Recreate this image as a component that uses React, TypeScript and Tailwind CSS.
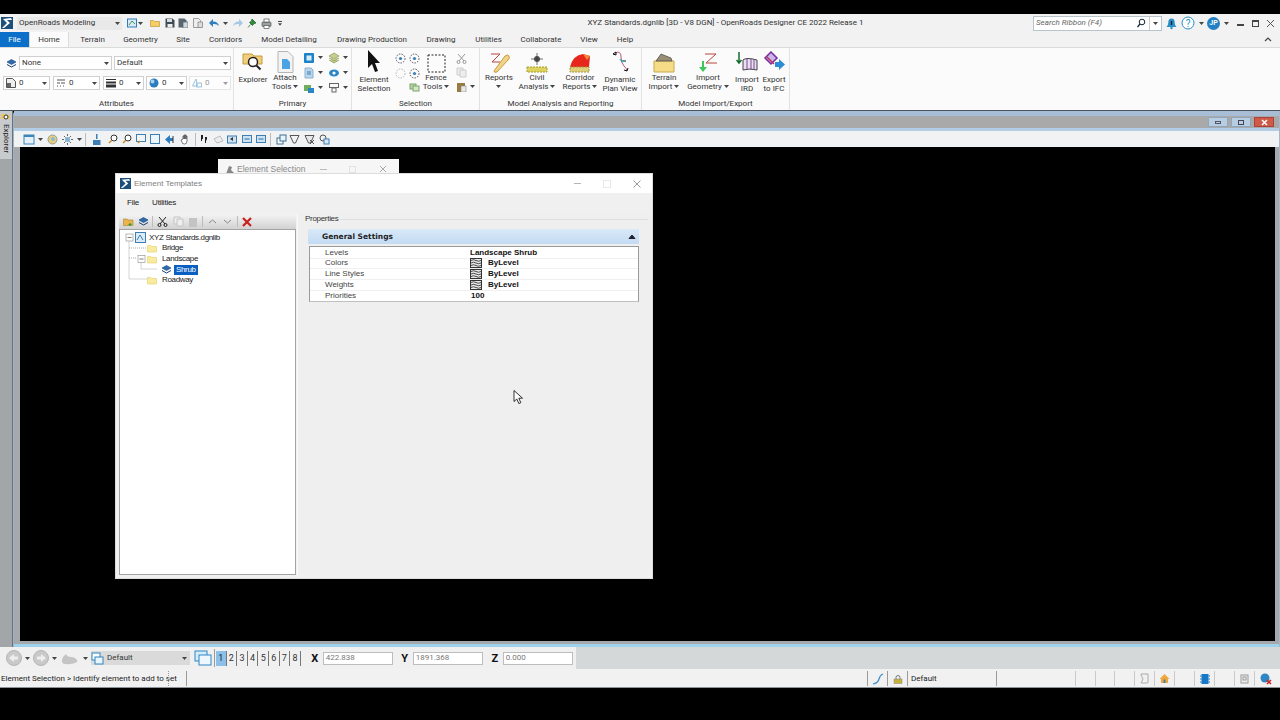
import React from "react";

const Tri = ({ c = "" }: { c?: string }) => (
  <svg viewBox="0 0 5 3" className={"w-[5px] h-[3px] shrink-0 " + c}><path d="M0 0h5L2.5 3z" fill="#444" /></svg>
);

const Sv = ({ s = 12, h, children, c = "" }: { s?: number; h?: number; children: React.ReactNode; c?: string }) => (
  <svg viewBox={`0 0 ${s} ${h ?? s}`} width={s} height={h ?? s} className={"shrink-0 " + c}>{children}</svg>
);

const Logo = ({ s = 12 }: { s?: number }) => (
  <svg viewBox="0 0 12 12" width={s} height={s} className="shrink-0">
    <rect width="12" height="12" fill="#1d4f7c" />
    <path d="M1 11 L6 6 L2 2 L10 1 L11 3 L6 3 L9 6 L3 11z" fill="#fff" />
  </svg>
);

const Folder = ({ s = 10 }: { s?: number }) => (
  <svg viewBox="0 0 10 10" width={s} height={s} className="shrink-0">
    <path d="M0.5 2.5h3.5l1 1h4.5v5.5h-9z" fill="#f9eb9c" stroke="#e3cf6c" strokeWidth=".6" />
  </svg>
);

const SmallIcon = ({ k }: { k: number }) => {
  const m: React.ReactNode[] = [
    <g key="a"><rect x="1" y="1" width="10" height="10" rx="1" fill="#1c83c9" /><rect x="3.5" y="3.5" width="5" height="5" fill="#d8ecfa" /></g>,
    <path key="b" d="M1 4l5-3 5 3-5 3zM1 6l5 3 5-3M1 8l5 3 5-3" fill="#c8cf8e" stroke="#8b9651" strokeWidth=".7" />,
    <g key="c"><path d="M2 1h6l2 2v8H2z" fill="#b9d6ee" stroke="#8fb0cc" /><path d="M4 5h4M4 7h4" stroke="#3d7fb5" /></g>,
    <g key="d"><ellipse cx="6" cy="6" rx="5" ry="3.5" fill="#2b86c8" /><circle cx="6" cy="6" r="1.6" fill="#fff" /></g>,
    <g key="e"><rect x="1" y="3" width="7" height="6" fill="#6eae5c" /><rect x="5" y="6" width="6" height="5" fill="#2b86c8" /></g>,
    <g key="f" fill="none" stroke="#666"><rect x="1.5" y="1.5" width="9" height="4" /><rect x="4" y="6" width="4" height="4" /></g>,
  ];
  return <Sv>{m[k]}</Sv>;
};

const DashCircle = ({ on }: { on?: boolean }) => (
  <Sv s={11}>
    <circle cx="5.5" cy="5.5" r="4.5" fill="none" stroke={on ? "#445" : "#aaa"} strokeWidth=".9" strokeDasharray="1.5 1.2" />
    {on && <circle cx="5.5" cy="5.5" r="1.6" fill="#3b7fb5" />}
  </Sv>
);

const Big = ({ w, icon, a, b, caret, low, ml }: { w: string; icon: React.ReactNode; a: string; b?: string; caret?: boolean; low?: boolean; ml?: string }) => (
  <div className={"flex flex-col items-center shrink-0 " + w + " " + (ml ?? "")}>
    <div className="h-[25px] flex items-end justify-center">{icon}</div>
    <div className={"flex flex-col items-center leading-[8.5px] text-[#333] " + (low ? "mt-[3px]" : "mt-[1px]")}>
      <span className="whitespace-nowrap">{a}</span>
      <span className="whitespace-nowrap flex items-center gap-[2px] h-[8.5px]">{b}{caret && <Tri />}</span>
    </div>
  </div>
);

const Group = ({ w, label, children }: { w: string; label: string; children: React.ReactNode }) => (
  <div className={"h-full flex flex-col shrink-0 border-r border-[#e2e2e2] " + w}>
    <div className="flex-1 flex relative min-h-0">{children}</div>
    <div className="h-[12px] flex items-center justify-center text-[#333] whitespace-nowrap">{label}</div>
  </div>
);

const Combo = ({ w, text, tint = "", icon }: { w: string; text?: string; tint?: string; icon?: React.ReactNode }) => (
  <div className={"h-[14px] bg-white border border-[#d0d0d0] flex items-center px-[2px] gap-[3px] " + w + " " + tint}>
    {icon}
    <span className="flex-1 text-[#333] whitespace-nowrap">{text}</span>
    <Tri />
  </div>
);

const tabs: [string, string][] = [
  ["Terrain", "w-[47px]"], ["Geometry", "w-[49px]"], ["Site", "w-[36px]"], ["Corridors", "w-[49px]"],
  ["Model Detailing", "w-[78px]"], ["Drawing Production", "w-[88px]"], ["Drawing", "w-[50px]"], ["Utilities", "w-[45px]"],
  ["Collaborate", "w-[60px]"], ["View", "w-[36px]"], ["Help", "w-[36px]"],
];

const Sep = ({ c = "" }: { c?: string }) => <div className={"w-px h-[13px] bg-[#bcbcbc] shrink-0 " + c} />;

const Mag = ({ c = "#333" }: { c?: string }) => (
  <Sv s={10}><circle cx="6" cy="4" r="3" fill="#fff" stroke={c} strokeWidth="1" /><path d="M3.8 6.2L1 9" stroke="#c98a2b" strokeWidth="1.5" /></Sv>
);

const Swatch = () => (
  <Sv s={12} h={10}>
    <rect x=".5" y=".5" width="11" height="9" fill="#e8e8e8" stroke="#333" />
    <path d="M1 2.5q2.5-1.5 5 0t5 0M1 5q2.5-1.5 5 0t5 0M1 7.5q2.5-1.5 5 0t5 0" fill="none" stroke="#222" strokeWidth=".8" />
  </Sv>
);

const LevelIcon = ({ s = 11 }: { s?: number }) => (
  <svg viewBox="0 0 11 10" width={s} height={s} className="shrink-0">
    <path d="M1 3.5L5.5 1 10 3.5 5.5 6z" fill="#2b6cb0" stroke="#153e75" strokeWidth=".6" />
    <path d="M1 6l4.5 2.5L10 6" fill="none" stroke="#153e75" strokeWidth="1" />
  </svg>
);

const Row = ({ l, children }: { l: string; children: React.ReactNode }) => (
  <div className="h-[10.65px] flex items-center border-b border-[#f0f0f0] last:border-b-0">
    <span className="w-[160px] pl-[15px] text-[#444] whitespace-nowrap">{l}</span>
    {children}
  </div>
);

const By = () => (
  <div className="flex items-center gap-[6px]"><Swatch /><span className="font-bold text-[#111]">ByLevel</span></div>
);

const Field = ({ l, v, w }: { l: string; v: string; w: string }) => (
  <div className="flex items-center gap-[4px] shrink-0">
    <span className="font-bold text-[11px] text-[#111] w-[8px] text-center">{l}</span>
    <div className={"h-[13px] bg-white border border-[#bdbdbd] px-[2px] flex items-center text-[#777] " + w}>{v}</div>
  </div>
);

const SLine = ({ m }: { m: string }) => <div className={"w-px h-[15px] bg-[#9a9a9a] shrink-0 " + m} />;

const dlg = { fontFamily: '"Liberation Sans", Arial, sans-serif' };

export default function App() {
  return (
    <div className="w-[1280px] h-[720px] bg-black overflow-hidden flex flex-col text-[8px] leading-none" style={{ fontFamily: 'Roboto, "Noto Sans", sans-serif' }}>
      <div className="h-[14px] shrink-0" />
      {/* title bar */}
      <div className="h-[18px] shrink-0 bg-[#f2f2f2] flex items-center pl-[1px] relative">
        <Logo />
        <div className="ml-[4px] w-[105px] h-[13px] bg-[#e9e9e9] flex items-center pl-[2px] pr-[2px] text-[#333]">
          <span className="flex-1">OpenRoads Modeling</span><Tri />
        </div>
        <div className="ml-[5px] flex items-center">
          <Sv s={10}><rect x=".5" y="1" width="9" height="8" fill="#dbe9f6" stroke="#2d7dbd" /><path d="M2 7l3-4 3 3" fill="none" stroke="#3b9a5b" /></Sv>
          <Tri c="ml-[1px]" />
          <span className="ml-[7px]"><Sv s={10}><path d="M.5 2.5h3l1 1h5v5h-9z" fill="#f4cf68" stroke="#c4962b" strokeWidth=".7" /></Sv></span>
          <span className="ml-[5px]"><Sv s={10}><path d="M.5.5h7l2 2v7h-9z" fill="#3f4a55" /><rect x="2" y="1" width="5" height="3" fill="#d6dbe0" /><rect x="2.5" y="6" width="5" height="3.5" fill="#eee" /></Sv></span>
          <span className="ml-[3px]"><Sv s={10}><path d="M.5.5h6l2 2v7h-8z" fill="#58646f" /><path d="M5 4h5v6H5z" fill="#cfd6dc" stroke="#58646f" strokeWidth=".7" /></Sv></span>
          <span className="ml-[5px]"><Sv s={10}><path d="M.5.5h5l2 2v7h-7z" fill="#eee" stroke="#888" strokeWidth=".8" /><path d="M5 4h4.5v5.5H5z" fill="#ddd" stroke="#888" strokeWidth=".8" /></Sv></span>
          <span className="ml-[6px]"><Sv s={10}><path d="M0 5l4-4v2.500q5 0 6 4.500-2-2.500-6-2v3z" fill="#2f7fbf" /></Sv></span>
          <Tri c="ml-[4px]" />
          <span className="ml-[5px]"><Sv s={10}><path d="M10 5L6 1v2.500q-5 0-6 4.500 2-2.500 6-2v3z" fill="#a5c8e4" /></Sv></span>
          <span className="ml-[4px]"><Sv s={10}><path d="M5 1l4 4-2 .5-1.500 2-3-3 2-1.500zM3.500 6.500L1 9.500" fill="#2f8a3e" stroke="#1f6a2e" strokeWidth=".8" /></Sv></span>
          <span className="ml-[4px]"><Sv s={11}><rect x="1" y="4" width="9" height="4.500" rx="1" fill="#9aa5a0" stroke="#555" strokeWidth=".7" /><rect x="3" y="1" width="5" height="3" fill="#fff" stroke="#555" strokeWidth=".7" /><rect x="3" y="7.500" width="5" height="3" fill="#fff" stroke="#555" strokeWidth=".7" /></Sv></span>
          <span className="ml-[6px] flex flex-col items-center gap-[1px]"><span className="w-[4px] h-px bg-[#444]" /><Tri c="!w-[4px]" /></span>
        </div>
        <div className="flex-1 text-center text-[#333] whitespace-nowrap pl-[136px]">XYZ Standards.dgnlib [3D - V8 DGN] - OpenRoads Designer CE 2022 Release 1</div>
        <div className="flex items-center pr-[5px]">
          <div className="w-[129px] h-[15px] bg-white border border-[#b8c4cc] flex items-center pl-[2px] italic text-[#666]">
            <span className="flex-1">Search Ribbon (F4)</span>
            <Sv s={10} c="mr-[3px]"><circle cx="6" cy="4" r="2.800" fill="none" stroke="#123" strokeWidth="1" /><path d="M4 6L1.500 9" stroke="#123" strokeWidth="1.200" /></Sv>
            <div className="w-[12px] h-full border-l border-[#ccc] flex items-center justify-center"><Tri /></div>
          </div>
          <span className="ml-[3px]"><Sv s={13}><path d="M6.500 1.500q-3.200 0-3.200 4 0 3-1.800 4.500h10q-1.800-1.500-1.800-4.500 0-4-3.200-4z" fill="#2b8fc9" /><circle cx="6.500" cy="11" r="1.200" fill="#2b8fc9" /><rect x="5.800" y="4" width="1.400" height="4" fill="#123" /></Sv></span>
          <span className="ml-[3px]"><Sv s={14}><circle cx="7" cy="7" r="6" fill="#fff" stroke="#2b8fc9" strokeWidth="1" /><text x="7" y="10.500" textAnchor="middle" fontSize="10" fill="#2b8fc9">?</text></Sv></span>
          <Tri c="ml-[4px]" />
          <div className="ml-[3px] w-[13px] h-[13px] rounded-full bg-[#2480c4] text-white flex items-center justify-center text-[7px] font-semibold">JP</div>
          <Tri c="ml-[4px]" />
          <span className="ml-[8px] w-[7px] h-[2px] mt-[3px] bg-[#444]" />
          <span className="ml-[8px] w-[7px] h-[7px] border border-[#444] border-t-2" />
          <span className="ml-[7px]"><Sv s={9}><path d="M1 1l7 7M8 1L1 8" stroke="#555" strokeWidth="1" /></Sv></span>
        </div>
      </div>
      {/* tabs */}
      <div className="h-[15px] shrink-0 bg-[#f2f2f2] flex text-[#333] relative">
        <div className="w-[29px] bg-[#0b70c9] text-white flex items-center justify-center">File</div>
        <div className="w-[40px] bg-[#fbfbfb] border-l border-r border-[#dcdcdc] flex items-center justify-center">Home</div>
        {tabs.map(([t, w]) => <div key={t} className={"flex items-center justify-center whitespace-nowrap " + w}>{t}</div>)}
        <div className="flex-1" />
        <div className="flex items-center pr-[8px]"><Sv s={8} h={5}><path d="M1 4l3-3 3 3" fill="none" stroke="#444" strokeWidth="1.200" /></Sv></div>
      </div>
      {/* ribbon */}
      <div className="h-[63px] shrink-0 bg-[#fbfbfb] border-t border-[#dadada] flex">
        <Group w="w-[234px]" label="Attributes">
          <div className="flex flex-col pt-[8px] pl-[3px] gap-[6px]">
            <div className="flex items-center">
              <span className="w-[16px] flex justify-center"><LevelIcon /></span>
              <Combo w="w-[93px]" text="None" />
              <Combo w="w-[117px] ml-[2px]" text="Default" />
            </div>
            <div className="flex items-center">
              <Combo w="w-[47px]" text="0" icon={<Sv s={10}><path d="M.5.5h6l3 3v6h-9z" fill="#eee" stroke="#555" /><rect x="1" y="5" width="4" height="4" fill="#666" /></Sv>} />
              <Combo w="w-[47px] ml-[3px]" text="0" icon={<Sv s={10}><path d="M1 2h8M1 5h3M5 5h4M1 8h1M4 8h1M7 8h1" stroke="#555" /></Sv>} />
              <Combo w="w-[41px] ml-[3px]" text="0" icon={<Sv s={10}><path d="M0 1.500h10" stroke="#333" /><path d="M0 4.500h10" stroke="#333" strokeWidth="2" /><path d="M0 8h10" stroke="#333" strokeWidth="3" /></Sv>} />
              <Combo w="w-[41px] ml-[2px]" text="0" icon={<Sv s={10}><circle cx="5" cy="5" r="4.500" fill="#2b7cc0" /><circle cx="3.500" cy="3.500" r="2" fill="#a8d0ec" /></Sv>} />
              <Combo w="w-[42px] ml-[2px] opacity-50" text="0" icon={<Sv s={10}><path d="M4 1L.5 8h5zM4.500 5h5v4h-5z" fill="none" stroke="#3b8fc4" /></Sv>} />
            </div>
          </div>
        </Group>
        <Group w="w-[118px]" label="Primary">
          <Big w="w-[38px]" low icon={
            <Sv s={24} h={22}><path d="M2 3h9l2 2h8v8H2z" fill="#f0cf7c" stroke="#c49a3a" /><circle cx="12" cy="11" r="4.500" fill="#fff" stroke="#222" strokeWidth="1.500" /><path d="M15.500 14.500l4 4" stroke="#222" strokeWidth="2" /></Sv>
          } a="" b="Explorer" />
          <Big w="w-[26px]" ml="ml-[0px]" icon={
            <Sv s={19} h={22}><path d="M2 .5h10l5 5v16H2z" fill="#f3f3f3" stroke="#b5b5b5" /><path d="M6 8h5l3 3v7H6z" fill="#4aa3e3" /></Sv>
          } a="Attach" b="Tools" caret />
          <div className="ml-[5px] mt-[3px] grid grid-cols-2 gap-x-[2px] gap-y-[2px] w-[48px] h-[40px]">
            {[0, 1, 2, 3, 4, 5].map((k) => (
              <div key={k} className="flex items-center gap-[3px] h-[13px]">
                <SmallIcon k={k} /><Tri />
              </div>
            ))}
          </div>
        </Group>
        <Group w="w-[128px]" label="Selection">
          <Big w="w-[38px]" ml="ml-[3px]" low icon={
            <Sv s={14} h={23}><path d="M1 0l12 13H8l3 8-3 1-3-8-4 4z" fill="#111" /></Sv>
          } a="Element" b="Selection" />
          <div className="pt-[5px] w-[28px] grid grid-cols-2 gap-y-[3px] h-[46px] justify-items-center">
            <DashCircle on /><DashCircle on /><DashCircle /><DashCircle on />
            <span /><Sv s={11}><rect x="1" y="2" width="6" height="5" fill="#b9d6a8" stroke="#7aa66a" /><rect x="4" y="4" width="6" height="5" fill="#d4e6c8" stroke="#7aa66a" /></Sv>
          </div>
          <Big w="w-[30px]" icon={
            <Sv s={19} h={19}><rect x="1" y="1" width="17" height="17" fill="none" stroke="#222" strokeDasharray="2 1.500" /></Sv>
          } a="Fence" b="Tools" caret />
          <div className="ml-[5px] pt-[5px] flex flex-col gap-[3px] items-start h-[46px]">
            <Sv s={11}><path d="M2 1l6 7M9 1L3 8" stroke="#999" /><circle cx="2.500" cy="9" r="1.500" fill="none" stroke="#999" /><circle cx="8.500" cy="9" r="1.500" fill="none" stroke="#999" /></Sv>
            <Sv s={11}><path d="M1 1h6v7H1z" fill="#eee" stroke="#ccc" /><path d="M4 3h6v7H4z" fill="#eee" stroke="#ccc" /></Sv>
            <div className="flex items-center gap-[3px]"><Sv s={11}><rect x="1" y="2" width="8" height="9" fill="#9a7b3e" /><rect x="5" y="5" width="5" height="6" fill="#e8e8e8" stroke="#888" strokeWidth=".6" /></Sv><Tri /></div>
          </div>
        </Group>
        <Group w="w-[162px]" label="Model Analysis and Reporting">
          <Big w="w-[38px]" icon={
            <Sv s={22} h={20}><path d="M3 1h9L4 9h8" fill="none" stroke="#b8453a" /><path d="M6 18L17 3q3-2 4 0t-1 4L9 19q-3 1-3-1z" fill="#f0d48a" stroke="#c99a3a" /></Sv>
          } a="Reports" b="" caret />
          <Big w="w-[38px]" icon={
            <Sv s={22} h={20}><circle cx="11" cy="6" r="3" fill="#555" /><path d="M11 0v12M5 6h12" stroke="#333" strokeWidth=".7" /><rect x="1" y="14" width="20" height="5" fill="#ddd35e" stroke="#a59c2e" strokeDasharray="2 1" /></Sv>
          } a="Civil" b="Analysis" caret />
          <Big w="w-[48px]" icon={
            <Sv s={22} h={20}><path d="M1 14Q4 2 14 1l7 2-1 11z" fill="#e8271c" /><path d="M14 1l7 2-3 4z" fill="#f08a3a" /><rect x="1" y="14" width="19" height="5" fill="#e0cf7a" stroke="#a5953e" strokeDasharray="2 1" /></Sv>
          } a="Corridor" b="Reports" caret />
          <Big w="w-[32px]" low icon={
            <Sv s={20} h={22}><path d="M5 2q6-3 6 4 0 6 3 9t3 5" fill="none" stroke="#c05a70" strokeWidth="1" /><path d="M3 3l3-2v3zM11 10h5M14 19l3 1 1-3" fill="none" stroke="#111" /><path d="M10 8q2 4 5 2" fill="none" stroke="#35b8c4" strokeWidth="1.200" /></Sv>
          } a="Dynamic" b="Plan View" />
        </Group>
        <Group w="w-[148px]" label="Model Import/Export">
          <Big w="w-[44px]" ml="ml-[0px]" icon={
            <Sv s={22} h={21}><path d="M1 9h20v11H1z" fill="#f5dd88" stroke="#c5a94a" /><path d="M3 9l5-7 10 4 1 3z" fill="#9a8f74" stroke="#444" strokeWidth=".7" /></Sv>
          } a="Terrain" b="Import" caret />
          <Big w="w-[44px]" icon={
            <Sv s={22} h={22}><path d="M8 3h11L9 12h11" fill="none" stroke="#b8453a" /><path d="M5 10v6H2l4 5 4-5H7v-6z" fill="#3fc65a" /></Sv>
          } a="Import" b="Geometry" caret />
          <Big w="w-[34px]" low icon={
            <Sv s={22} h={22}><path d="M3 1v10M0.500 9L3 12l2.500-3" stroke="#146c2e" strokeWidth="1.500" fill="none" /><path d="M7 9q3-3 14 0v10q-7-2-14 0z" fill="#e9dff0" stroke="#444" /><path d="M11 8v11M15 8v11M18 8v11" stroke="#7a4a90" /></Sv>
          } a="Import" b="IRD" />
          <Big w="w-[20px]" low icon={
            <Sv s={22} h={22}><path d="M8 1l6 6-6 6-6-6z" fill="#c9b6ea" stroke="#7a2b9a" strokeWidth="1.500" /><path d="M12 11h4V8l6 5.500-6 5.500v-3h-4z" fill="#2b8ed4" /><path d="M4 6l7 7" stroke="#c0305a" strokeWidth="1.500" /></Sv>
          } a="Export" b="to IFC" />
        </Group>
      </div>
      {/* MDI area */}
      <div className="h-[537px] shrink-0 flex border-t border-[#4a5560]">
        <div className="w-[13px] shrink-0 bg-[#a3a6a9] border-r border-[#6a7176]">
          <div className="w-[12px] h-[48px] bg-[#c8cbcd] flex flex-col items-center pt-[1px] gap-[2px]">
            <Sv s={10}><path d="M0 2h5l1 1h3v4H0z" fill="#e8c868" /><circle cx="5" cy="5" r="2" fill="#fff" stroke="#333" /></Sv>
            <span className="text-[#222] [writing-mode:vertical-rl]">Explorer</span>
          </div>
        </div>
        <div className="flex-1 min-w-0 flex flex-col border-l border-[#9db4cd] rounded-tl-[4px] bg-[#d5dfe8]">
          <div className="h-[5px] shrink-0 bg-[#a8bed7]" />
          <div className="h-[12px] shrink-0 bg-[#a9a9a9] flex items-center justify-end pr-[5px] gap-[3px]">
            <div className="w-[20px] h-[10px] bg-[#b6cde2] border border-[#8ea7bf] flex items-center justify-center"><span className="w-[6px] h-[3px] border border-[#556]" /></div>
            <div className="w-[20px] h-[10px] bg-[#b6cde2] border border-[#8ea7bf] flex items-center justify-center"><span className="w-[6px] h-[5px] border border-[#445]" /></div>
            <div className="w-[20px] h-[10px] bg-[#cf5a4a] border border-[#a8443a] flex items-center justify-center"><Sv s={7}><path d="M1 1l5 5M6 1L1 6" stroke="#fff" strokeWidth="1.500" /></Sv></div>
          </div>
          <div className="h-[3px] shrink-0 bg-[#b4cde6]" />
          <div className="h-[16px] shrink-0 bg-[#f0f2f3] flex items-center pl-[9px]">
            <Sv s={12}><rect x="1" y="2" width="10" height="9" fill="#e5f0f8" stroke="#3d84b8" /><rect x="1" y="2" width="10" height="2" fill="#3d84b8" /></Sv>
            <Tri c="ml-[3px]" />
            <span className="ml-[4px]"><Sv s={11}><circle cx="5.500" cy="5.500" r="4.500" fill="#e3d07a" stroke="#999" /><circle cx="6" cy="5" r="2" fill="#8fb8d8" /></Sv></span>
            <span className="ml-[4px]"><Sv s={11}><circle cx="5.500" cy="5.500" r="2.500" fill="#7fb4d8" /><path d="M5.500 0v2M5.500 9v2M0 5.500h2M9 5.500h2M2 2l1.500 1.500M9 2L7.500 3.500M2 9l1.500-1.500M9 9L7.500 7.500" stroke="#666" /></Sv></span>
            <Tri c="ml-[4px]" />
            <Sep c="ml-[3px]" />
            <span className="ml-[5px]"><Sv s={11}><path d="M5 0h1.500v5H5zM2 6h7.500v5H2z" fill="#3d7fb5" /></Sv></span>
            {[0, 1].map((i) => <span key={i} className={i ? "ml-[4px]" : "ml-[6px]"}><Mag /></span>)}
            <span className="ml-[4px]"><Sv s={10}><rect x=".5" y=".5" width="9" height="7" fill="none" stroke="#3d7fb5" /><path d="M2 9l2-2" stroke="#c98a2b" strokeWidth="1.500" /></Sv></span>
            <span className="ml-[4px]"><Sv s={10}><rect x=".5" y=".5" width="9" height="9" fill="#eef5fb" stroke="#3d7fb5" /></Sv></span>
            <span className="ml-[5px]"><Sv s={11}><path d="M0 5.500L5 1v3h3v3H5v3z" fill="#2b7cc0" /><path d="M8 2v7" stroke="#333" /></Sv></span>
            <span className="ml-[4px]"><Sv s={11}><path d="M3 5V2h1v3-4h1v4-4h1v4-3h1v5q0 3-2.500 3T2 8L1 6z" fill="#fff" stroke="#444" strokeWidth=".7" /></Sv></span>
            <Sep c="ml-[4px]" />
            <span className="ml-[3px]"><Sv s={10}><path d="M2 1h2v4H3v2H2zM6 3h2v2l-1 2v2H6z" fill="#222" /></Sv></span>
            <span className="ml-[4px]"><Sv s={11}><path d="M1 5l6-3 3 5-6 2z" fill="#eee" stroke="#bbb" /></Sv></span>
            <span className="ml-[3px]"><Sv s={10}><rect x=".5" y="2" width="9" height="7" fill="#cfe2f1" stroke="#3d7fb5" /><path d="M3 5l3-2v4z" fill="#333" /></Sv></span>
            <span className="ml-[5px]"><Sv s={10}><rect x=".5" y="1.500" width="9" height="7" fill="#cfe2f1" stroke="#3d7fb5" /><path d="M2.500 5h5" stroke="#2b6ca0" /></Sv></span>
            <span className="ml-[4px]"><Sv s={10}><rect x=".5" y="1.500" width="9" height="7" fill="#cfe2f1" stroke="#3d7fb5" /><path d="M2.500 5h5" stroke="#2b6ca0" /></Sv></span>
            <Sep c="ml-[4px]" />
            <span className="ml-[5px]"><Sv s={11}><rect x="1" y="4" width="6" height="6" fill="#fff" stroke="#3d6f95" /><rect x="4" y="1" width="6" height="6" fill="#e8f2fa" stroke="#3d6f95" /></Sv></span>
            <span className="ml-[2px]"><Sv s={11}><path d="M1 1.500h9L6.500 9h-2z" fill="#f2f2f2" stroke="#555" /></Sv></span>
            <span className="ml-[4px]"><Sv s={11}><path d="M1 1.500h9L6.500 9h-2z" fill="#e8e8e8" stroke="#555" /><path d="M6 6l4 4M10 6l-4 4" stroke="#555" /></Sv></span>
            <span className="ml-[4px]"><Sv s={11}><circle cx="4" cy="4" r="3" fill="#f2f2f2" stroke="#555" /><rect x="5" y="5" width="5" height="5" fill="#dce9f4" stroke="#3d7fb5" /></Sv></span>
          </div>
          {/* viewport */}
          <div className="flex-1 min-h-0 pl-[6px] pr-[4px] pb-[3px] bg-[#a5a9ad]">
            <div className="h-full bg-black relative">
              {/* back dialog */}
              <div className="absolute left-[198px] top-[12px] w-[181px] h-[20px] bg-[#f6f6f6] flex items-center pl-[7px] text-[#8a8a8a] text-[8.5px]" style={dlg}>
                <Sv s={11}><path d="M1 10l3-8 3 1-1 3 4 4z" fill="#888" /></Sv>
                <span className="ml-[1px] flex-1">Element Selection</span>
                <span className="w-[7px] h-px bg-[#bbb] mr-[22px]" />
                <span className="w-[7px] h-[7px] border border-[#e2e2e2] mr-[23px]" />
                <span className="mr-[12px]"><Sv s={8}><path d="M1 1l6 6M7 1L1 7" stroke="#aaa" /></Sv></span>
              </div>
              {/* element templates */}
              <div className="absolute left-[95px] top-[26px] w-[538px] h-[406px] bg-[#f0f0f0] border border-[#dcdcdc] flex flex-col text-[8px]" style={dlg}>
                <div className="h-[19px] shrink-0 bg-white flex items-center pl-[4px] text-[#808080]">
                  <Logo s={11} />
                  <span className="ml-[3px] flex-1">Element Templates</span>
                  <span className="w-[7px] h-px bg-[#b5b5b5] mr-[22px]" />
                  <span className="w-[8px] h-[8px] border border-[#e8e8e8] mr-[22px]" />
                  <span className="mr-[11px]"><Sv s={8}><path d="M.5.500l7 7M7.500.500l-7 7" stroke="#999" /></Sv></span>
                </div>
                <div className="h-[20px] shrink-0 flex items-center pl-[11px] gap-[13px] text-[#222] tracking-[-0.2px]">
                  <span>File</span><span>Utilities</span>
                </div>
                <div className="flex-1 min-h-0 flex pl-[3px] pb-[3px]">
                  <div className="w-[177px] shrink-0 flex flex-col">
                    <div className="h-[15px] mt-[1px] shrink-0 bg-gradient-to-b from-[#f4f4f4] to-[#d2d2d2] flex items-center pl-[4px]">
                      <Sv s={11}><path d="M.5 3h3.500l1 1h5v5.500H.5z" fill="#e9b44c" stroke="#a9842e" strokeWidth=".6" /><path d="M7 7v3M5.500 8.500h3" stroke="#2a9a3e" strokeWidth="1.200" /></Sv>
                      <span className="ml-[4px]"><LevelIcon s={11} /></span>
                      <Sep c="ml-[3px] !h-[11px]" />
                      <span className="ml-[4px]"><Sv s={11}><path d="M2 1l6 7M9 1L3 8" stroke="#222" /><circle cx="2.500" cy="9" r="1.500" fill="none" stroke="#222" /><circle cx="8.500" cy="9" r="1.500" fill="none" stroke="#222" /></Sv></span>
                      <span className="ml-[5px]"><Sv s={11}><path d="M1 1h6v7H1z" fill="#eee" stroke="#c4c4c4" /><path d="M4 3h6v7H4z" fill="#eee" stroke="#c4c4c4" /></Sv></span>
                      <span className="ml-[4px]"><Sv s={11}><rect x="1" y="2" width="8" height="9" fill="#c4c4c4" /></Sv></span>
                      <Sep c="ml-[3px] !h-[11px]" />
                      <span className="ml-[5px]"><Sv s={9}><path d="M1 6l3.500-3L8 6" fill="none" stroke="#888" /></Sv></span>
                      <span className="ml-[6px]"><Sv s={9}><path d="M1 3l3.500 3L8 3" fill="none" stroke="#888" /></Sv></span>
                      <Sep c="ml-[5px] !h-[11px]" />
                      <span className="ml-[4px]"><Sv s={10}><path d="M1 1l8 8M9 1L1 9" stroke="#c8201c" strokeWidth="2.200" /></Sv></span>
                    </div>
                    <div className="flex-1 bg-white border border-[#a3a3a3] pt-[2.500px] text-[#222] relative tracking-[-0.35px]">
                      <svg width="60" height="60" viewBox="0 0 60 60" className="absolute left-0 top-0">
                        <g stroke="#aaa" strokeWidth="1" strokeDasharray="1 1" fill="none">
                          <path d="M9 10.500V49H27M9 18H27M9 28H17M21 33.500V39H37" />
                        </g>
                        <g fill="#fff" stroke="#999" strokeWidth=".7">
                          <rect x="6" y="4" width="7" height="7" /><rect x="18" y="25.500" width="7" height="7" />
                        </g>
                        <path d="M7.500 7.500h4M19.500 29h4" stroke="#444" strokeWidth=".7" />
                      </svg>
                      <div className="h-[10.650px] flex items-center pl-[15px] relative">
                        <Sv s={11}><rect x=".5" y=".5" width="10" height="10" fill="#dcebf7" stroke="#3d7fb5" /><path d="M2 8l3-5 3 5" fill="none" stroke="#3d7fb5" /></Sv>
                        <span className="ml-[3px]">XYZ Standards.dgnlib</span>
                      </div>
                      {["Bridge", "Landscape"].map((t) => (
                        <div key={t} className="h-[10.650px] flex items-center pl-[27px] relative"><Folder /><span className="ml-[5px]">{t}</span></div>
                      ))}
                      <div className="h-[10.650px] flex items-center pl-[41px] relative"><LevelIcon /><span className="ml-[2px] bg-[#0a60c2] text-white px-[2px] h-[10px] flex items-center">Shrub</span></div>
                      <div className="h-[10.650px] flex items-center pl-[27px] relative"><Folder /><span className="ml-[5px]">Roadway</span></div>
                    </div>
                  </div>
                  <div className="flex-1 min-w-0 flex flex-col pl-[4px] pr-[4px] bg-[#efefef] border-l border-[#fafafa] ml-[1px]">
                    <div className="h-[10px] mt-[1px] flex items-center pl-[3px] gap-[2px] text-[#333] tracking-[-0.3px]">
                      <span>Properties</span><div className="flex-1 h-px bg-[#dfdfdf]" />
                    </div>
                    <div className="ml-[6px] mr-[9px] mt-[5px] h-[15px] bg-gradient-to-b from-[#d9e9f8] to-[#c3dbf3] flex items-center pl-[14px] pr-[3px] font-bold text-[#222]" style={{ fontFamily: '"DejaVu Sans", sans-serif' }}>
                      <span className="flex-1 text-[7.5px]">General Settings</span>
                      <Sv s={8} h={5}><path d="M1 4.500L4 1l3 3.500z" fill="#223" stroke="#223" /></Sv>
                    </div>
                    <div className="ml-[7px] mr-[9px] mt-[2px] h-[56px] bg-white border border-[#9a9a9a] border-b-[#c0c0c0] pt-[1px]">
                      <Row l="Levels"><span className="font-bold text-[#111]">Landscape Shrub</span></Row>
                      <Row l="Colors"><By /></Row>
                      <Row l="Line Styles"><By /></Row>
                      <Row l="Weights"><By /></Row>
                      <Row l="Priorities"><span className="font-bold text-[#111] pl-[1px]">100</span></Row>
                    </div>
                  </div>
                </div>
              </div>
              {/* cursor */}
              <svg viewBox="0 0 10 15" width="10" height="15" className="absolute left-[493px] top-[243px]">
                <path d="M1 .5v11l2.800-2.500 2 4.500 2-.8-2-4.500h3.700z" fill="#fff" stroke="#000" strokeWidth=".8" />
              </svg>
            </div>
          </div>
          <div className="h-[3px] shrink-0 bg-[#9fd2ea]" />
        </div>
        <div className="w-[1px] shrink-0 bg-[#a9b8c6]" />
      </div>
      {/* bottom toolbar */}
      <div className="h-[22px] shrink-0 bg-[#d5d8d8] flex">
        <div className="w-[576px] shrink-0 bg-[#f0f0f0] flex items-center pl-[6px]">
          <span><Sv s={16}><circle cx="8" cy="8" r="7.500" fill="#c9c9c9" stroke="#b5b5b5" /><path d="M3 8l5-4v2.500h4v3H8V12z" fill="#eee" /></Sv></span>
          <Tri c="ml-[3px]" />
          <span className="ml-[3px]"><Sv s={16}><circle cx="8" cy="8" r="7.500" fill="#c9c9c9" stroke="#b5b5b5" /><path d="M13 8L8 4v2.500H4v3h4V12z" fill="#eee" /></Sv></span>
          <Tri c="ml-[3px]" />
          <span className="ml-[4px]"><Sv s={17} h={13}><path d="M1 8q1-4 4-6 1 3 5 3t6 3-7 4-8-4z" fill="#c4c4c4" /></Sv></span>
          <Tri c="ml-[5px]" />
          <div className="ml-[3px] w-[99px] h-[14px] bg-[#dadada] flex items-center pr-[3px] gap-[3px] text-[#333]">
            <Sv s={13}><rect x="1" y="1" width="8" height="7" fill="#fff" stroke="#2f86c4" /><rect x="4" y="5" width="8" height="7" fill="#eaf4fb" stroke="#2f86c4" /></Sv>
            <span className="flex-1">Default</span><Tri />
          </div>
          <span className="ml-[4px]"><Sv s={18} h={17}><rect x="1" y="1" width="12" height="10" fill="#d7ecfa" stroke="#2f86c4" /><rect x="5" y="5" width="12" height="10" fill="#eef7fd" stroke="#2f86c4" /></Sv></span>
          <div className="ml-[2px] w-px h-[18px] bg-[#9a9a9a]" />
          <div className="ml-[1px] flex items-center">
            {[1, 2, 3, 4, 5, 6, 7, 8].map((n) => (
              <div key={n} className={"w-[10.600px] h-[15px] flex items-center justify-center border-r border-[#777] text-[9px] " + (n === 1 ? "bg-[#8dc0e8] text-[#123]" : "text-[#333]")}>{n}</div>
            ))}
          </div>
          <div className="ml-[10px]" />
          <Field l="X" v="422.838" w="w-[70px]" />
          <div className="ml-[8px]" />
          <Field l="Y" v="1891.368" w="w-[70px]" />
          <div className="ml-[8px]" />
          <Field l="Z" v="0.000" w="w-[70px]" />
        </div>
      </div>
      {/* status bar */}
      <div className="h-[19px] shrink-0 bg-[#f1f1f1] flex items-center text-[#222] pl-[1px] pt-[1px] border-b border-[#8d9297]">
        <span className="w-[167px] shrink-0 whitespace-nowrap">Element Selection &gt; Identify element to add to set</span>
        <div className="w-[2px] h-[15px] border-l border-dotted border-[#999] shrink-0" />
        <SLine m="ml-[16px]" />
        <SLine m="ml-[680px]" />
        <span className="w-[19px] flex justify-center shrink-0"><Sv s={12}><path d="M1 11q5-1 6-5t4-5" fill="none" stroke="#3d8dc4" strokeWidth="1.200" /></Sv></span>
        <SLine m="" />
        <span className="w-[19px] flex justify-center shrink-0"><Sv s={10}><path d="M3 5V3.500a2 2 0 014 0V5" fill="none" stroke="#777" /><rect x="1" y="5" width="8" height="4.500" fill="#c4b23a" stroke="#888" strokeWidth=".5" /></Sv></span>
        <SLine m="" />
        <span className="w-[88px] pl-[3px] shrink-0">Default</span>
        <SLine m="" />
        <SLine m="ml-[78px] !bg-[#c9c9c9]" />
        <SLine m="ml-[19px] !bg-[#c9c9c9]" />
        <SLine m="ml-[18px] !bg-[#c9c9c9]" />
        <SLine m="ml-[19px] !bg-[#c9c9c9]" />
        <span className="w-[19px] flex justify-center shrink-0"><Sv s={11}><path d="M2 1h7v8q0 1-1 1H2l2-4-2-4z" fill="none" stroke="#aaa" /></Sv></span>
        <SLine m="!bg-[#c9c9c9]" />
        <span className="w-[19px] flex justify-center shrink-0"><Sv s={11}><path d="M5.500 1L.5 6H2v4h7V6h1.500z" fill="#f0a83a" /><rect x="4.500" y="6.500" width="2" height="3.500" fill="#4a7fb0" /></Sv></span>
        <SLine m="!bg-[#c9c9c9]" />
        <SLine m="ml-[19px] !bg-[#c9c9c9]" />
        <span className="w-[19px] flex justify-center shrink-0"><Sv s={10}><rect x="1.500" y="0" width="7" height="10" fill="#1778c8" /><path d="M0 2h1.500M0 5h1.500M0 8h1.500M8.500 2H10M8.500 5H10M8.500 8H10" stroke="#1778c8" /></Sv></span>
        <SLine m="!bg-[#c9c9c9]" />
        <SLine m="ml-[19px] !bg-[#c9c9c9]" />
        <span className="w-[19px] flex justify-center shrink-0"><Sv s={10}><rect x="1" y="1" width="7" height="8" fill="#eee" stroke="#999" /><rect x="3" y="3" width="3" height="3" fill="none" stroke="#999" /></Sv></span>
        <SLine m="!bg-[#c9c9c9]" />
        <span className="w-[22px] flex justify-center shrink-0"><Sv s={12}><circle cx="5" cy="5" r="4.500" fill="#2f86c4" /><path d="M7 7l4 4M11 7l-4 4" stroke="#d0201c" strokeWidth="1.500" /></Sv></span>
      </div>
      <div className="h-[32px] shrink-0" />
    </div>
  );
}
